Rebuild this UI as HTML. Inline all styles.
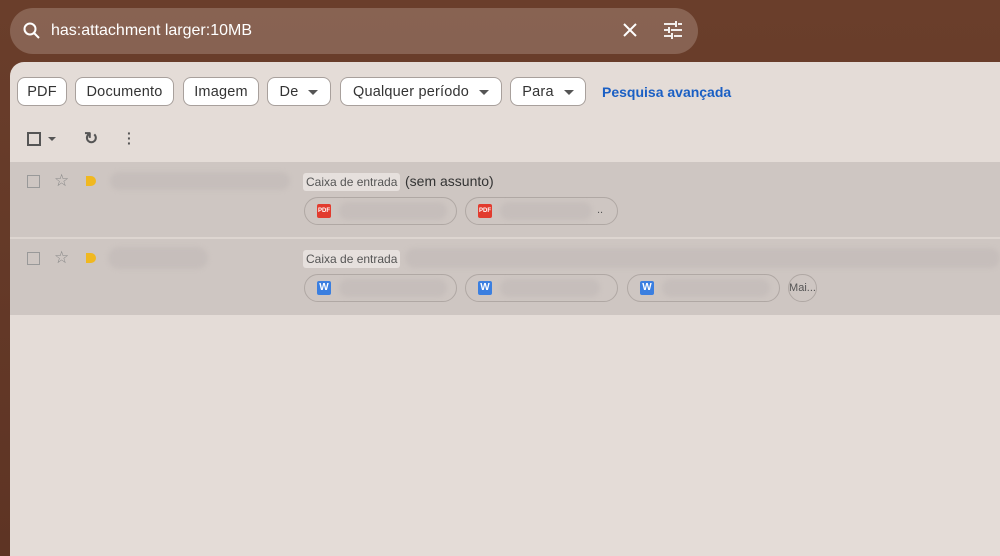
<!DOCTYPE html><html><head><style>
body{margin:0;width:1000px;height:556px;overflow:hidden;background:linear-gradient(180deg,#6a3e2b,#5e3424);font-family:"Liberation Sans",sans-serif;position:relative}
.a{position:absolute}
.search{left:10px;top:8px;width:688px;height:46px;border-radius:23px;background:rgba(160,130,115,.55)}
.panel{left:10px;top:62px;width:990px;height:494px;background:#e4dcd7;border-radius:14px 0 0 0}
.chip{position:absolute;top:77px;height:29px;border:1px solid #a8a09c;border-radius:8px;background:#fff;font-size:14.5px;color:#333;line-height:28px;text-align:center;box-sizing:border-box;letter-spacing:.2px}
.tri{display:inline-block;width:0;height:0;border-left:5px solid transparent;border-right:5px solid transparent;border-top:5px solid #555;margin-left:10px;vertical-align:middle}
.row{left:10px;width:990px;background:#cec6c2}
.lbl{position:absolute;font-size:12px;color:#555;background:#e6e0dd;padding:2px 3px;border-radius:3px}
.att{position:absolute;height:28px;border:1px solid #b0a8a4;border-radius:15px;box-sizing:border-box}
.blur{position:absolute;background:#c6bebb;border-radius:12px;filter:blur(2px)}
.ic{position:absolute;width:14px;height:14px;color:#fff;font-size:10px;font-weight:bold;text-align:center;line-height:14px;border-radius:2px}
.cb{position:absolute;width:11px;height:11px;border:1.5px solid #999}
</style></head><body>
<div class="a search"></div>
<svg class="a" style="left:22px;top:21px" width="20" height="20" viewBox="0 0 20 20"><circle cx="8" cy="8" r="5.5" fill="none" stroke="#fff" stroke-width="2"/><path d="M12 12l5 5" stroke="#fff" stroke-width="2"/></svg>
<div class="a" style="left:51px;top:22px;font-size:16px;color:#fff">has:attachment larger:10MB</div>
<svg class="a" style="left:622px;top:22px" width="16" height="16"><path d="M2 2l12 12M14 2L2 14" stroke="#fff" stroke-width="2"/></svg>
<svg class="a" style="left:663px;top:21px" width="20" height="18"><path d="M1 3h11M15 3h4M1 9h4M8 9h11M1 15h7M11 15h8M13 0v6M6 6v6M9 12v6" stroke="#fff" stroke-width="1.8"/></svg>
<div class="a panel"></div>
<div class="chip" style="left:17px;width:50px">PDF</div>
<div class="chip" style="left:75px;width:99px">Documento</div>
<div class="chip" style="left:183px;width:76px">Imagem</div>
<div class="chip" style="left:267px;width:64px">De<span class="tri"></span></div>
<div class="chip" style="left:340px;width:162px">Qualquer período<span class="tri"></span></div>
<div class="chip" style="left:510px;width:76px">Para<span class="tri"></span></div>
<div class="a" style="left:602px;top:84px;font-size:14px;color:#1a5fc4;font-weight:bold">Pesquisa avançada</div>
<div class="cb" style="left:27px;top:132px;border:2px solid #555;width:10px;height:10px"></div>
<div class="a" style="left:48px;top:137px;border-left:4px solid transparent;border-right:4px solid transparent;border-top:4px solid #555"></div>
<div class="a" style="left:84px;top:129px;font-size:17px;color:#555;font-weight:bold">↻</div>
<div class="a" style="left:127px;top:131px;font-size:14px;color:#555;line-height:5px;font-weight:bold">·<br>·<br>·</div>
<div class="a row" style="top:162px;height:75px"></div>
<div class="a row" style="top:239px;height:76px"></div>
<div class="a" style="left:10px;top:237px;width:990px;height:2px;background:#ddd5d0"></div>
<div class="cb" style="left:27px;top:175px"></div><div class="a" style="left:54px;top:171px;color:#888;font-size:17px">☆</div>
<div class="a" style="left:86px;top:176px;width:10px;height:10px;background:#f0b820;border-radius:0 6px 6px 0"></div>
<div class="blur" style="left:110px;top:172px;width:180px;height:18px"></div>
<div class="lbl" style="left:303px;top:173px">Caixa de entrada</div>
<div class="a" style="left:405px;top:173px;font-size:14px;color:#333">(sem assunto)</div>
<div class="att" style="left:304px;top:197px;width:153px"><div class="ic" style="left:12px;top:6px;background:#e23b2e;font-size:6px">PDF</div><div class="blur" style="left:34px;top:4px;width:108px;height:18px"></div></div>
<div class="att" style="left:465px;top:197px;width:153px"><div class="ic" style="left:12px;top:6px;background:#e23b2e;font-size:6px">PDF</div><div class="blur" style="left:34px;top:4px;width:92px;height:18px"></div><div class="a" style="left:131px;top:6px;font-size:11px;color:#555">..</div></div>
<div class="cb" style="left:27px;top:252px"></div><div class="a" style="left:54px;top:248px;color:#888;font-size:17px">☆</div>
<div class="a" style="left:86px;top:253px;width:10px;height:10px;background:#f0b820;border-radius:0 6px 6px 0"></div>
<div class="blur" style="left:108px;top:247px;width:100px;height:22px"></div>
<div class="lbl" style="left:303px;top:250px">Caixa de entrada</div>
<div class="blur" style="left:405px;top:248px;width:595px;height:20px"></div>
<div class="att" style="left:304px;top:274px;width:153px"><div class="ic" style="left:12px;top:6px;background:#3b7fe0">W</div><div class="blur" style="left:34px;top:4px;width:108px;height:18px"></div></div>
<div class="att" style="left:465px;top:274px;width:153px"><div class="ic" style="left:12px;top:6px;background:#3b7fe0">W</div><div class="blur" style="left:34px;top:4px;width:100px;height:18px"></div></div>
<div class="att" style="left:627px;top:274px;width:153px"><div class="ic" style="left:12px;top:6px;background:#3b7fe0">W</div><div class="blur" style="left:34px;top:4px;width:108px;height:18px"></div></div>
<div class="att" style="left:788px;top:274px;width:29px;font-size:11px;color:#555;line-height:26px;text-align:center">Mai...</div>
</body></html>
